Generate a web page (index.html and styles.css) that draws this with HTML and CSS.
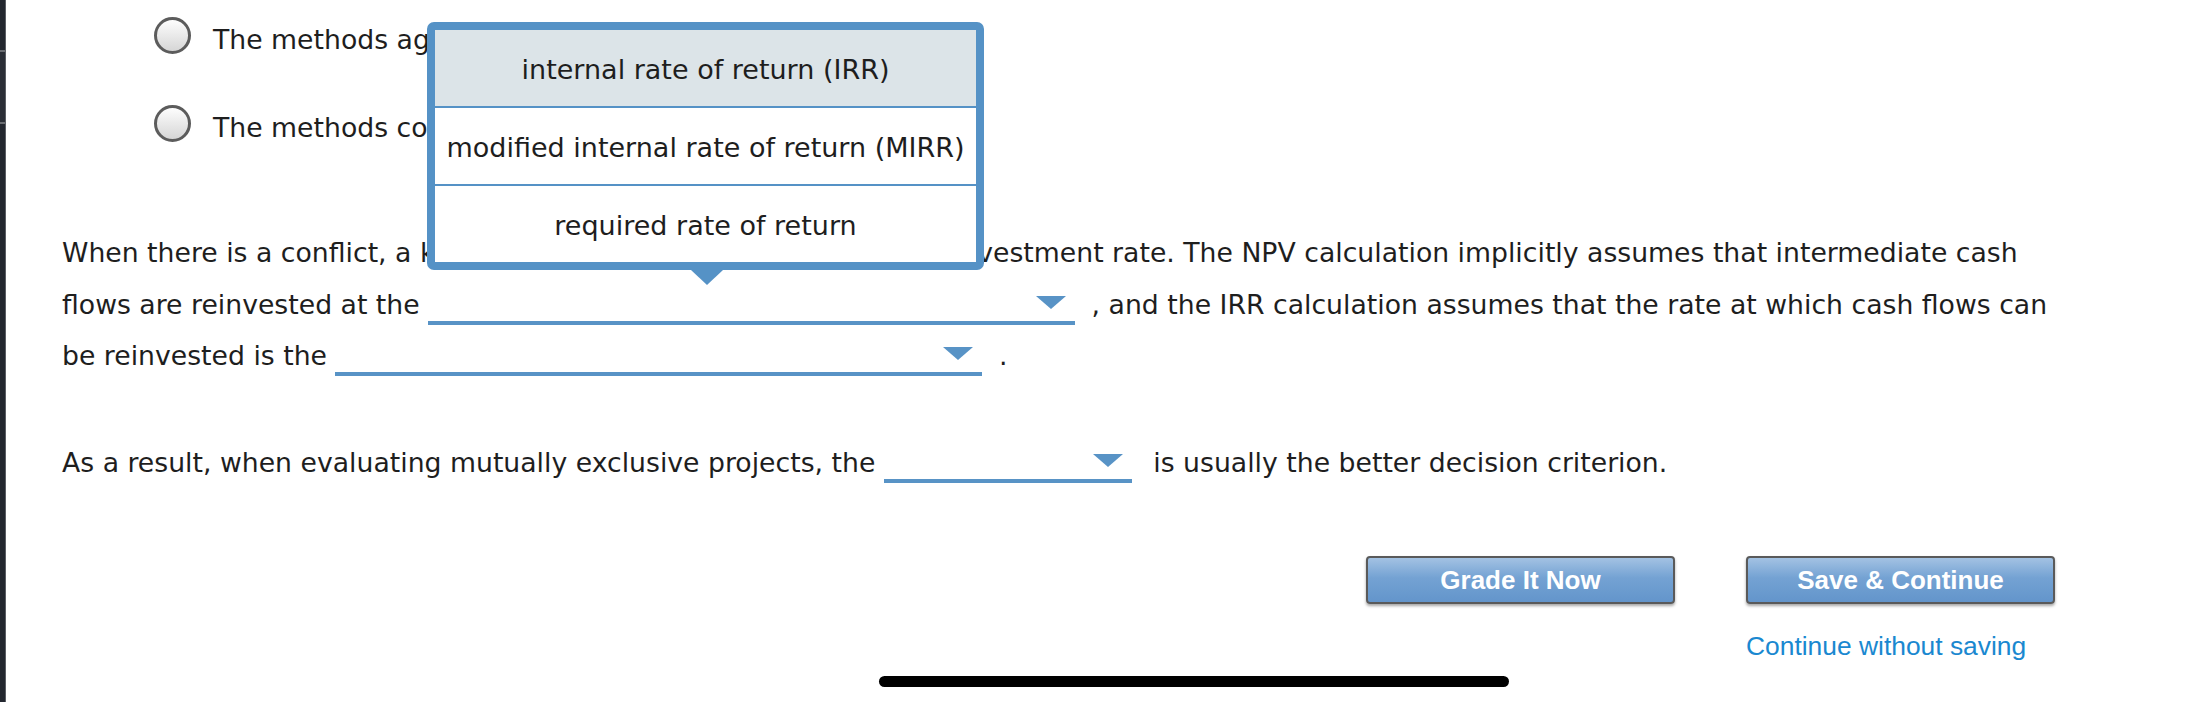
FILE: index.html
```html
<html>

<head>
    <title>Capital Budgeting: NPV vs IRR</title>
    <link rel="stylesheet" href="styles.css">
</head>

<body>
    <div class="frame">
        <div class="edge">
            <div class="edge-top"></div>
        </div>

        <div class="question">
            <ul class="choices">
                <li class="choice">
                    <span class="radio"></span>
                    <span class="choice-text">The methods agree.</span>
                </li>
                <li class="choice">
                    <span class="radio"></span>
                    <span class="choice-text">The methods conflict.</span>
                </li>
            </ul>

            <p class="prompt">
                When there is a conflict, a key difference among methods is the reinvestment rate. The NPV calculation implicitly assumes that intermediate cash
                flows are reinvested at the <span class="dropdown wide"></span> , and the IRR calculation assumes that the rate at which cash flows can
                be reinvested is the <span class="dropdown wide"></span> .
            </p>

            <p class="prompt">
                As a result, when evaluating mutually exclusive projects, the <span class="dropdown short"></span> is usually the better decision criterion.
            </p>

            <div class="actions">
                <div class="action">
                    <button class="btn">Grade It Now</button>
                </div>
                <div class="action">
                    <button class="btn">Save &amp; Continue</button>
                    <a class="skip-link" href="#">Continue without saving</a>
                </div>
            </div>

            <!-- open list for the first dropdown -->
            <div class="menu">
                <div class="menu-item active">internal rate of return (IRR)</div>
                <div class="menu-item">modified internal rate of return (MIRR)</div>
                <div class="menu-item">required rate of return</div>
            </div>
        </div>
    </div>

    <div class="home-bar"></div>
</body>

</html>
```

FILE: styles.css
```css
body {
    margin: 0;
    background: #fff;
    color: #1e1e1e;
    font-family: "DejaVu Sans", Verdana, sans-serif;
    font-size: 26.7px;
    overflow: hidden;
}

.frame {
    display: flex;
    min-height: 702px;
}

.edge {
    width: 5px;
    background: #23272f;
    border-right: 1px solid #5b5e64;
    flex-shrink: 0;
}

.edge-top {
    height: 122px;
    border-bottom: 2px solid #6a6d72;
    background: linear-gradient(#23272f 50px, #6a6d72 50px, #6a6d72 52px, #2a2e36 52px);
}

.question {
    flex: 1;
    position: relative;
    padding: 17px 0 0 56px;
}

/* radio choices */
.choices {
    list-style: none;
    margin: 0 0 0 92px;
    padding: 0;
    display: flex;
    flex-direction: column;
    gap: 47px;
}

.choice {
    display: flex;
    align-items: flex-start;
    gap: 22px;
}

.radio {
    width: 31px;
    height: 31px;
    border: 3px solid #5c5c5c;
    border-radius: 50%;
    background: linear-gradient(#fdfdfd, #d6d6d6);
    flex-shrink: 0;
}

.choice-text {
    line-height: 36px;
    margin-top: 5px;
}

/* fill-in sentences */
.prompt {
    width: 2000px;
    margin: 81px 0 0 0;
    line-height: 51.5px;
}

.prompt + .prompt {
    margin-top: 55px;
}

.dropdown {
    display: inline-block;
    position: relative;
    height: 30px;
    border-bottom: 4px solid #5893c6;
    vertical-align: -11px;
    margin-right: 8px;
}

.dropdown::after {
    content: "";
    position: absolute;
    right: 9px;
    bottom: 12px;
    border-left: 15px solid transparent;
    border-right: 15px solid transparent;
    border-top: 13px solid #5893c6;
}

.dropdown.wide {
    width: 647px;
}

.dropdown.short {
    width: 248px;
    margin-right: 13px;
}

/* buttons */
.actions {
    display: flex;
    justify-content: flex-end;
    gap: 71px;
    padding-right: 146px;
    margin-top: 68px;
}

.action {
    display: flex;
    flex-direction: column;
    align-items: flex-start;
}

.btn {
    width: 309px;
    height: 48px;
    border: 2px solid #5a5a5a;
    border-radius: 4px;
    background: linear-gradient(#a3c2e3, #74a2d3 45%, #6395cb);
    box-shadow: 0 2px 3px rgba(0, 0, 0, 0.35);
    color: #fff;
    font-family: "Liberation Sans", Arial, sans-serif;
    font-weight: bold;
    font-size: 26px;
    padding: 0;
}

.skip-link {
    margin-top: 27px;
    color: #1a88d0;
    text-decoration: none;
    font-family: "Liberation Sans", Arial, sans-serif;
    font-size: 26.4px;
    line-height: 30px;
}

/* open dropdown list */
.menu {
    position: absolute;
    left: 421px;
    top: 22px;
    width: 541px;
    border: 8px solid #5592c6;
    border-radius: 7px;
    background: #fff;
    font-size: 27px;
}

.menu::after {
    content: "";
    position: absolute;
    left: 256px;
    top: 100%;
    margin-top: 8px;
    border-left: 16px solid transparent;
    border-right: 16px solid transparent;
    border-top: 15px solid #5592c6;
}

.menu-item {
    height: 78px;
    display: flex;
    align-items: center;
    justify-content: center;
    padding-top: 2px;
    box-sizing: border-box;
    border-top: 2px solid #5592c6;
    color: #1e1e1e;
}

.menu-item:first-child {
    border-top: 0;
    height: 76px;
}

.menu-item.active {
    background: #dce4e8;
}

.home-bar {
    position: absolute;
    left: 879px;
    top: 676px;
    width: 630px;
    height: 11px;
    border-radius: 6px;
    background: #000;
}
```
